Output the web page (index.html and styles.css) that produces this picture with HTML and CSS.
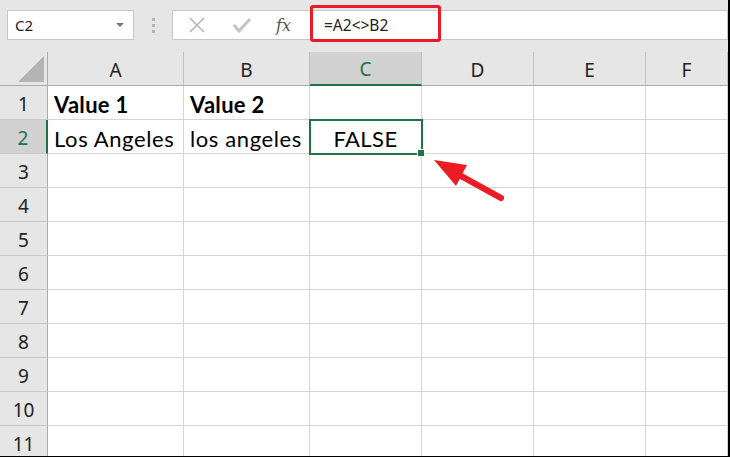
FILE: index.html
```html
<!DOCTYPE html>
<html lang="en">
<head>
  <meta charset="UTF-8" />
  <title>Excel - Not Equal</title>
  <link rel="stylesheet" href="styles.css">
</head>
<body>
  <div class="app">
    <div class="formula-bar">
      <div class="name-box">
        <span>C2</span>
        <span class="caret"></span>
      </div>
      <div class="grip"><i></i><i></i><i></i></div>
      <div class="fx-buttons">
        <svg class="btn-icon" width="18" height="18" viewBox="0 0 18 18">
          <path d="M2 2 L16 16 M16 2 L2 16" stroke="#b7b7b7" stroke-width="1.6" fill="none"/>
        </svg>
        <svg class="btn-icon" width="20" height="18" viewBox="0 0 20 18">
          <path d="M2 9 L7 15 L18 3" stroke="#c4c4c4" stroke-width="3" fill="none"/>
        </svg>
        <span class="fx">fx</span>
      </div>
      <div class="formula-input">
        <span class="formula">=A2&lt;&gt;B2</span>
      </div>
    </div>

    <div class="sheet">
      <div class="corner"><span class="corner-tri"></span></div>
      <div class="col-head">A</div>
      <div class="col-head">B</div>
      <div class="col-head active">C</div>
      <div class="col-head">D</div>
      <div class="col-head">E</div>
      <div class="col-head">F</div>

      <div class="row-head">1</div>
      <div class="cell bold">Value 1</div>
      <div class="cell bold">Value 2</div>
      <div class="cell"></div><div class="cell"></div><div class="cell"></div><div class="cell"></div>

      <div class="row-head active">2</div>
      <div class="cell">Los Angeles</div>
      <div class="cell">los angeles</div>
      <div class="cell selected">FALSE<span class="handle"></span></div>
      <div class="cell"></div><div class="cell"></div><div class="cell"></div>

      <div class="row-head">3</div>
      <div class="cell"></div><div class="cell"></div><div class="cell"></div><div class="cell"></div><div class="cell"></div><div class="cell"></div>
      <div class="row-head">4</div>
      <div class="cell"></div><div class="cell"></div><div class="cell"></div><div class="cell"></div><div class="cell"></div><div class="cell"></div>
      <div class="row-head">5</div>
      <div class="cell"></div><div class="cell"></div><div class="cell"></div><div class="cell"></div><div class="cell"></div><div class="cell"></div>
      <div class="row-head">6</div>
      <div class="cell"></div><div class="cell"></div><div class="cell"></div><div class="cell"></div><div class="cell"></div><div class="cell"></div>
      <div class="row-head">7</div>
      <div class="cell"></div><div class="cell"></div><div class="cell"></div><div class="cell"></div><div class="cell"></div><div class="cell"></div>
      <div class="row-head">8</div>
      <div class="cell"></div><div class="cell"></div><div class="cell"></div><div class="cell"></div><div class="cell"></div><div class="cell"></div>
      <div class="row-head">9</div>
      <div class="cell"></div><div class="cell"></div><div class="cell"></div><div class="cell"></div><div class="cell"></div><div class="cell"></div>
      <div class="row-head">10</div>
      <div class="cell"></div><div class="cell"></div><div class="cell"></div><div class="cell"></div><div class="cell"></div><div class="cell"></div>
      <div class="row-head">11</div>
      <div class="cell"></div><div class="cell"></div><div class="cell"></div><div class="cell"></div><div class="cell"></div><div class="cell"></div>
    </div>

    <!-- annotation overlays -->
    <div class="highlight-box"></div>
    <svg class="arrow" width="730" height="457" viewBox="0 0 730 457">
      <path d="M501 198 L452 171" stroke="#ed1c24" stroke-width="6" stroke-linecap="round" fill="none"/>
      <path d="M434 160 L467 165 L456 186 Z" fill="#ed1c24"/>
    </svg>
  </div>
</body>
</html>
```

FILE: styles.css
```css
* {
  box-sizing: border-box;
}
body {
  margin: 0;
  font-family: 'Noto Sans', 'Open Sans', sans-serif;
  background: #ffffff;
}
.app {
  position: relative;
  width: 730px;
  height: 457px;
  overflow: hidden;
  background: #e6e6e6;
  border-right: 2px solid #000;
  border-bottom: 1px solid #000;
}

/* formula bar */
.formula-bar {
  height: 52px;
  display: flex;
  align-items: flex-start;
  padding: 10px 0 0 7px;
}
.name-box {
  width: 127px;
  height: 30px;
  background: #fff;
  border: 1px solid #c6c6c6;
  display: flex;
  align-items: center;
  justify-content: space-between;
  padding: 0 9px 0 7px;
  font-size: 15px;
  color: #222;
}
.caret {
  width: 0;
  height: 0;
  border-left: 4px solid transparent;
  border-right: 4px solid transparent;
  border-top: 4px solid #777;
}
.grip {
  width: 38px;
  height: 30px;
  display: flex;
  flex-direction: column;
  align-items: center;
  justify-content: center;
  gap: 3px;
}
.grip i {
  width: 3px;
  height: 3px;
  background: #b4b4b4;
}
.fx-buttons {
  width: 136px;
  height: 30px;
  background: #fff;
  border: 1px solid #c6c6c6;
  border-right: none;
  display: flex;
  align-items: center;
  padding-left: 15px;
  gap: 26px;
}
.fx {
  font-family: 'DejaVu Serif', 'Liberation Serif', serif;
  font-style: italic;
  font-size: 16px;
  color: #555;
  margin-left: -2px;
}
.formula-input {
  flex: 1;
  height: 30px;
  background: #fff;
  border: 1px solid #c6c6c6;
  border-left: none;
  display: flex;
  align-items: center;
  padding-left: 16px;
  font-size: 15.5px;
  color: #222;
}

/* sheet grid */
.sheet {
  display: grid;
  grid-template-columns: 48px 136px 126px 112px 112px 112px 82px;
  grid-auto-rows: 34px;
}
.corner {
  background: #e6e6e6;
  border-right: 1px solid #ababab;
  border-bottom: 1px solid #ababab;
  position: relative;
}
.corner-tri {
  position: absolute;
  right: 3px;
  bottom: 3px;
  width: 0;
  height: 0;
  border-left: 26px solid transparent;
  border-bottom: 26px solid #b4b4b4;
}
.col-head {
  background: #e6e6e6;
  border-right: 1px solid #bfbfbf;
  border-bottom: 1px solid #ababab;
  display: flex;
  align-items: center;
  justify-content: center;
  font-size: 19px;
  color: #222;
  padding-top: 2px;
}
.col-head.active {
  background: #d2d2d2;
  border-bottom: 2px solid #217346;
  color: #217346;
}
.row-head {
  background: #e6e6e6;
  border-right: 1px solid #ababab;
  border-bottom: 1px solid #c8c8c8;
  display: flex;
  align-items: center;
  justify-content: center;
  font-size: 19px;
  color: #222;
  padding-top: 2px;
}
.row-head.active {
  background: #d2d2d2;
  border-right: 2px solid #217346;
  color: #217346;
}
.cell {
  position: relative;
  background: #fff;
  border-right: 1px solid #d4d4d4;
  border-bottom: 1px solid #d4d4d4;
  font-family: 'Lato', 'Noto Sans', sans-serif;
  font-size: 22px;
  letter-spacing: 0.6px;
  color: #000;
  padding: 3px 0 0 6px;
  display: flex;
  align-items: center;
  white-space: nowrap;
}
.cell.bold {
  font-weight: 700;
  letter-spacing: 0.3px;
}
.cell.selected {
  justify-content: center;
  padding-left: 0;
  letter-spacing: 0.4px;
  outline: 2px solid #217346;
  outline-offset: -1px;
  z-index: 1;
  overflow: visible;
}
.handle {
  position: absolute;
  right: -4px;
  bottom: -4px;
  width: 6px;
  height: 6px;
  background: #217346;
  border: 1px solid #fff;
  box-sizing: content-box;
}

/* annotations */
.highlight-box {
  position: absolute;
  left: 310px;
  top: 5px;
  width: 131px;
  height: 37px;
  border: 3px solid #ed1c24;
  border-radius: 3px;
}
.arrow {
  position: absolute;
  left: 0;
  top: 0;
  pointer-events: none;
}
```
